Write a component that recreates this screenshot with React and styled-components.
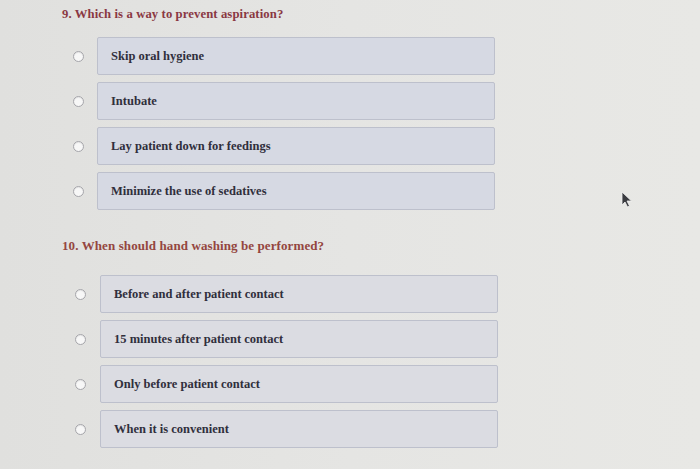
import React from "react";
import styled, { createGlobalStyle } from "styled-components";

const GlobalStyle = createGlobalStyle`
  html, body {
    margin: 0;
    padding: 0;
    background: #e3e3e1;
  }
  body {
    font-family: "Liberation Serif", Georgia, serif;
  }
`;

const Page = styled.div`
  position: relative;
  width: 700px;
  height: 469px;
  overflow: hidden;
  background: linear-gradient(90deg, #e0e0de 0%, #e5e5e3 50%, #e8e8e5 100%);
  padding: 6px 0 0 62px;
  box-sizing: border-box;
`;

const Question = styled.section`
  display: flex;
  flex-direction: column;
  margin-bottom: ${(p) => p.$after}px;
`;

const Title = styled.h3`
  margin: 0 0 ${(p) => p.$gap}px 0;
  font-size: ${(p) => p.$size}px;
  font-weight: 700;
  line-height: 16px;
  color: ${(p) => p.$color};
  letter-spacing: 0.1px;
`;

const Options = styled.div`
  display: flex;
  flex-direction: column;
  gap: 7px;
  padding-left: ${(p) => p.$indent}px;
`;

const Row = styled.label`
  display: flex;
  align-items: center;
  gap: ${(p) => p.$gap}px;
`;

const Radio = styled.span`
  width: 9px;
  height: 9px;
  border-radius: 50%;
  border: 1px solid #a5a5aa;
  background: #f7f7f7;
  box-shadow: inset 0 1px 1px rgba(0, 0, 0, 0.08);
  flex: none;
`;

const Choice = styled.div`
  width: 398px;
  height: 38px;
  box-sizing: border-box;
  display: flex;
  align-items: center;
  padding-left: 13px;
  background: ${(p) => p.$bg};
  border: 1px solid #bdc0cc;
  border-radius: 2px;
  font-size: 12.5px;
  font-weight: 700;
  color: #302f3c;
`;

const Cursor = styled.svg`
  position: absolute;
  left: 621px;
  top: 191px;
`;

const questions = [
  {
    title: "9. Which is a way to prevent aspiration?",
    color: "#8a3843",
    size: 12.7,
    indent: 11,
    rowGap: 13,
    gap: 15,
    after: 28,
    bg: "#d6d9e3",
    options: [
      "Skip oral hygiene",
      "Intubate",
      "Lay patient down for feedings",
      "Minimize the use of sedatives",
    ],
  },
  {
    title: "10. When should hand washing be performed?",
    color: "#94463f",
    size: 13,
    indent: 13,
    rowGap: 14,
    gap: 21,
    after: 0,
    bg: "#dbdce2",
    options: [
      "Before and after patient contact",
      "15 minutes after patient contact",
      "Only before patient contact",
      "When it is convenient",
    ],
  },
];

export default function App() {
  return (
    <>
      <GlobalStyle />
      <Page>
        {questions.map((q) => (
          <Question key={q.title} $after={q.after}>
            <Title $color={q.color} $gap={q.gap} $size={q.size}>
              {q.title}
            </Title>
            <Options $indent={q.indent}>
              {q.options.map((o) => (
                <Row key={o} $gap={q.rowGap}>
                  <Radio />
                  <Choice $bg={q.bg}>{o}</Choice>
                </Row>
              ))}
            </Options>
          </Question>
        ))}
        <Cursor width="12" height="17" viewBox="0 0 12 17">
          <path
            d="M1 1 L1 14 L4 11 L6.5 16 L8.5 15 L6 10 L10.5 10 Z"
            fill="#3a3b40"
            stroke="#f2f2f2"
            strokeWidth="0.8"
          />
        </Cursor>
      </Page>
    </>
  );
}
